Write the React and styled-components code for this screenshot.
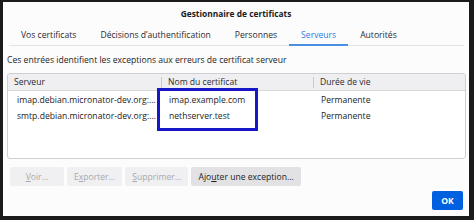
import React from "react";
import styled, { createGlobalStyle } from "styled-components";

const Global = createGlobalStyle`
  html, body { margin: 0; padding: 0; background: #1b1b1b; }
  body { width: 474px; height: 220px; overflow: hidden; font-family: "Open Sans", "Noto Sans", sans-serif; }
  * { box-sizing: border-box; }
`;

const Frame = styled.div`
  width: 474px;
  height: 220px;
  padding: 2px 5px 4px 3px;
`;

const Dialog = styled.div`
  width: 100%;
  height: 100%;
  background: #fcfcfc;
  display: flex;
  flex-direction: column;
  color: #1c1b22;
  font-size: 8.6px;
`;

const Title = styled.div`
  height: 22px;
  display: flex;
  align-items: center;
  justify-content: center;
  font-weight: 700;
  font-size: 8.4px;
`;

const TabBar = styled.div`
  margin: 0 5px 0 6px;
  height: 22px;
  display: flex;
  border-bottom: 1px solid #e4e4e6;
`;

const Tab = styled.div`
  padding: 1px 12px 0;
  display: flex;
  align-items: center;
  color: ${(p) => (p.$active ? "#2f7de1" : "#2b2a33")};
  border-bottom: 2px solid ${(p) => (p.$active ? "#4a90e2" : "transparent")};
  margin-bottom: -1px;
`;

const Description = styled.div`
  height: 27px;
  padding-left: 4px;
  display: flex;
  align-items: center;
`;

const Table = styled.div`
  position: relative;
  margin: 0 3px 0 4px;
  height: 86px;
  border: 1px solid #cfcfd3;
  border-radius: 3px;
  background: #fff;
  overflow: hidden;
`;

const Row = styled.div`
  display: grid;
  grid-template-columns: 153px 152px 1fr;
  height: ${(p) => (p.$header ? "17px" : "16px")};
  align-items: center;
  background: ${(p) => (p.$header ? "#efeff1" : "transparent")};
  border-bottom: ${(p) => (p.$header ? "1px solid #d8d8dc" : "none")};
  margin-bottom: ${(p) => (p.$header ? "1px" : "0")};
`;

const HeadCell = styled.div`
  padding-left: 6px;
  border-left: ${(p) => (p.$first ? "none" : "1px solid #c9c9cd")};
  height: 11px;
  display: flex;
  align-items: center;
  color: #2b2a33;
`;

const Cell = styled.div`
  padding-left: ${(p) => (p.$first ? "9px" : "8px")};
  white-space: nowrap;
  color: #1c1b22;
`;

const Highlight = styled.div`
  position: absolute;
  left: 149px;
  top: 14px;
  width: 101px;
  height: 43px;
  border: 3px solid #1717c8;
`;

const Buttons = styled.div`
  display: flex;
  gap: 3px;
  margin-top: 8px;
  padding-left: 7px;
  height: 19px;
`;

const Button = styled.div`
  min-width: 54px;
  padding: 0 7px;
  display: flex;
  align-items: center;
  justify-content: center;
  border-radius: 2px;
  background: ${(p) => (p.$disabled ? "#f0f0f2" : "#e2e2e4")};
  color: ${(p) => (p.$disabled ? "#a9a9ad" : "#1c1b22")};
  u { text-decoration-thickness: 1px; text-underline-offset: 1px; }
`;

const Footer = styled.div`
  display: flex;
  justify-content: flex-end;
  padding-right: 6px;
  margin-top: 5px;
`;

const OkButton = styled.div`
  width: 31px;
  height: 19px;
  border-radius: 2px;
  background: #0061e0;
  color: #fff;
  font-weight: 700;
  display: flex;
  align-items: center;
  justify-content: center;
`;

const tabs = [
  "Vos certificats",
  "Décisions d’authentification",
  "Personnes",
  "Serveurs",
  "Autorités",
];

const rows = [
  ["imap.debian.micronator-dev.org:…", "imap.example.com", "Permanente"],
  ["smtp.debian.micronator-dev.org:…", "nethserver.test", "Permanente"],
];

export default function App() {
  return (
    <>
      <Global />
      <Frame>
        <Dialog>
          <Title>Gestionnaire de certificats</Title>
          <TabBar>
            {tabs.map((t) => (
              <Tab key={t} $active={t === "Serveurs"}>
                {t}
              </Tab>
            ))}
          </TabBar>
          <Description>
            Ces entrées identifient les exceptions aux erreurs de certificat serveur
          </Description>
          <Table>
            <Row $header>
              <HeadCell $first>Serveur</HeadCell>
              <HeadCell>Nom du certificat</HeadCell>
              <HeadCell>Durée de vie</HeadCell>
            </Row>
            {rows.map((r) => (
              <Row key={r[0]}>
                <Cell $first>{r[0]}</Cell>
                <Cell>{r[1]}</Cell>
                <Cell>{r[2]}</Cell>
              </Row>
            ))}
            <Highlight />
          </Table>
          <Buttons>
            <Button $disabled>
              <u>V</u>oir…
            </Button>
            <Button $disabled>
              E<u>x</u>porter…
            </Button>
            <Button $disabled>
              <u>S</u>upprimer…
            </Button>
            <Button>
              Ajo<u>u</u>ter une exception…
            </Button>
          </Buttons>
          <Footer>
            <OkButton>OK</OkButton>
          </Footer>
        </Dialog>
      </Frame>
    </>
  );
}
